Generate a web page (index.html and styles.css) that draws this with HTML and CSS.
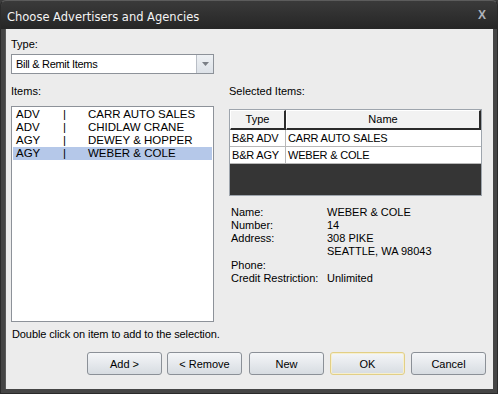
FILE: index.html
```html
<!DOCTYPE html>
<html lang="en">
<head>
  <meta charset="UTF-8">
  <title>Choose Advertisers and Agencies</title>
  <link rel="stylesheet" href="styles.css">
</head>
<body>
  <div class="window">
    <!-- Title bar -->
    <div class="titlebar">
      <span class="title">Choose Advertisers and Agencies</span>
      <span class="close">X</span>
    </div>

    <div class="client">
      <div class="columns">
        <!-- Left: type and items -->
        <div class="left">
          <div class="label">Type:</div>
          <div class="combo">
            <span class="combo-text">Bill &amp; Remit Items</span>
            <span class="combo-btn">
              <svg width="7" height="4" viewBox="0 0 7 4"><path d="M0 0h7L3.5 4z" fill="#7a7f86"/></svg>
            </span>
          </div>
          <div class="label label-items">Items:</div>
          <div class="listbox">
            <div class="row"><span class="c1">ADV</span><span class="c2">|</span><span>CARR AUTO SALES</span></div>
            <div class="row"><span class="c1">ADV</span><span class="c2">|</span><span>CHIDLAW CRANE</span></div>
            <div class="row"><span class="c1">AGY</span><span class="c2">|</span><span>DEWEY &amp; HOPPER</span></div>
            <div class="row selected"><span class="c1">AGY</span><span class="c2">|</span><span>WEBER &amp; COLE</span></div>
          </div>
        </div>

        <!-- Right: selected items and details -->
        <div class="right">
          <div class="label label-selected">Selected Items:</div>
          <div class="grid">
            <div class="grid-head">
              <div class="hcell htype">Type</div>
              <div class="hcell hname">Name</div>
            </div>
            <div class="grid-row">
              <div class="cell ctype">B&amp;R ADV</div>
              <div class="cell">CARR AUTO SALES</div>
            </div>
            <div class="grid-row">
              <div class="cell ctype">B&amp;R AGY</div>
              <div class="cell">WEBER &amp; COLE</div>
            </div>
            <div class="grid-empty"></div>
          </div>
          <div class="details">
            <span>Name:</span><span>WEBER &amp; COLE</span>
            <span>Number:</span><span>14</span>
            <span>Address:</span><span>308 PIKE<br>SEATTLE, WA 98043</span>
            <span class="phone">Phone:</span><span class="phone"></span>
            <span>Credit Restriction:</span><span>Unlimited</span>
          </div>
        </div>
      </div>

      <div class="hint">Double click on item to add to the selection.</div>

      <div class="buttons">
        <button class="btn">Add &gt;</button>
        <button class="btn btn-remove">&lt; Remove</button>
        <button class="btn btn-new">New</button>
        <button class="btn btn-default">OK</button>
        <button class="btn">Cancel</button>
      </div>
    </div>
  </div>
</body>
</html>
```

FILE: styles.css
```css
/* Reset */
* {
  margin: 0;
  padding: 0;
  box-sizing: border-box;
}
body {
  font-family: "Liberation Sans", Arial, sans-serif;
  font-size: 11px;
  color: #000;
  background: #3c3c3c;
}
/* Dialog frame */
.window {
  width: 498px;
  height: 394px;
  display: flex;
  flex-direction: column;
  background: #454545;
  border-radius: 6px 6px 0 0;
  padding: 0 4px 4px 4px;
  border: 1px solid #2a2a2a;
  border-top-color: #5c5c5c;
}
.titlebar {
  height: 28px;
  display: flex;
  align-items: center;
  justify-content: space-between;
  padding: 3px 11px 0 3px;
  background: linear-gradient(#3a3a3a, #262626);
  margin: 0 -4px;
  border-radius: 6px 6px 0 0;
}
.title {
  color: #f4f4f4;
  font-family: "DejaVu Sans", sans-serif;
  font-size: 11.5px;
  padding-left: 3px;
}
.close {
  color: #aeb2ba;
  font-size: 12px;
  font-weight: bold;
  margin-top: -3px;
}
/* Client area */
.client {
  flex: 1;
  background: #ececec;
  padding: 8px 5px 0 5px;
  display: flex;
  flex-direction: column;
  border-left: 1px solid #5a5a5a;
}
.columns {
  display: flex;
  gap: 15px;
}
.left {
  width: 203px;
  display: flex;
  flex-direction: column;
}
.right {
  width: 253px;
  display: flex;
  flex-direction: column;
}
.label {
  font-size: 11px;
  height: 14px;
  line-height: 14px;
}
/* Combo box */
.combo {
  margin-top: 3px;
  height: 20px;
  background: #fff;
  border: 1px solid #8d9299;
  display: flex;
  align-items: stretch;
}
.combo-text {
  flex: 1;
  padding: 3px 4px;
  letter-spacing: -0.3px;
}
.combo-btn {
  width: 17px;
  background: linear-gradient(#eef1f4, #dde2e8);
  border-left: 1px solid #b9bec6;
  display: flex;
  align-items: center;
  justify-content: center;
}
.label-items {
  margin-top: 10px;
}
/* Items list */
.listbox {
  margin-top: 8px;
  height: 216px;
  background: #fff;
  border: 1px solid #8d9299;
  padding: 1px 0 0 1px;
  font-size: 11.5px;
}
.row {
  display: flex;
  height: 13px;
  line-height: 13px;
  padding-left: 3px;
  margin-right: 1px;
}
.row.selected {
  background: #b5c8e9;
}
.c1 {
  width: 47px;
}
.c2 {
  width: 25px;
}
/* Selected items grid */
.label-selected {
  margin-top: 47px;
}
.grid {
  margin-top: 11px;
  height: 87px;
  border: 1px solid #9ea5ad;
  background: #353535;
  display: flex;
  flex-direction: column;
}
.grid-head,
.grid-row {
  display: flex;
  background: #fff;
}
.grid-head {
  height: 20px;
  background: #f2f2f2;
}
.hcell {
  text-align: center;
  line-height: 17px;
  border-top: 1px solid #fff;
  border-left: 1px solid #fff;
  border-right: 2px solid #2a2a2a;
  border-bottom: 2px solid #2a2a2a;
  font-size: 11px;
}
.htype,
.ctype {
  width: 56px;
}
.hname {
  flex: 1;
}
.grid-row {
  height: 17px;
  border-bottom: 1px solid #b8b8b8;
}
.cell {
  line-height: 16px;
  padding-left: 2px;
  font-size: 11px;
  letter-spacing: -0.2px;
}
.ctype {
  border-right: 1px solid #b8b8b8;
}
.grid-row .cell:last-child {
  flex: 1;
}
.grid-empty {
  flex: 1;
}
/* Detail text */
.details {
  margin-top: 10px;
  padding-left: 2px;
  display: grid;
  grid-template-columns: 96px 1fr;
  line-height: 13px;
  font-size: 11px;
}
.details .phone {
  margin-top: 1px;
}
/* Bottom hint and buttons */
.hint {
  margin-top: 5px;
  padding-left: 1px;
  line-height: 14px;
  letter-spacing: -0.1px;
}
.buttons {
  margin-top: 11px;
  display: flex;
  justify-content: flex-end;
  gap: 6px;
  padding-right: 2px;
}
.btn {
  width: 75px;
  height: 23px;
  font-family: "Liberation Sans", Arial, sans-serif;
  font-size: 11px;
  color: #000;
  background: linear-gradient(#f4f6f8, #e6e9ed 50%, #d7dce1);
  border: 1px solid #8b9097;
  border-radius: 3px;
}
.btn-remove {
  margin-left: -1px;
}
.btn-new {
  margin-left: 1px;
}
.btn-default {
  border-color: #e2cf86;
  box-shadow: inset 0 0 0 1px #f6efcf;
}
```
